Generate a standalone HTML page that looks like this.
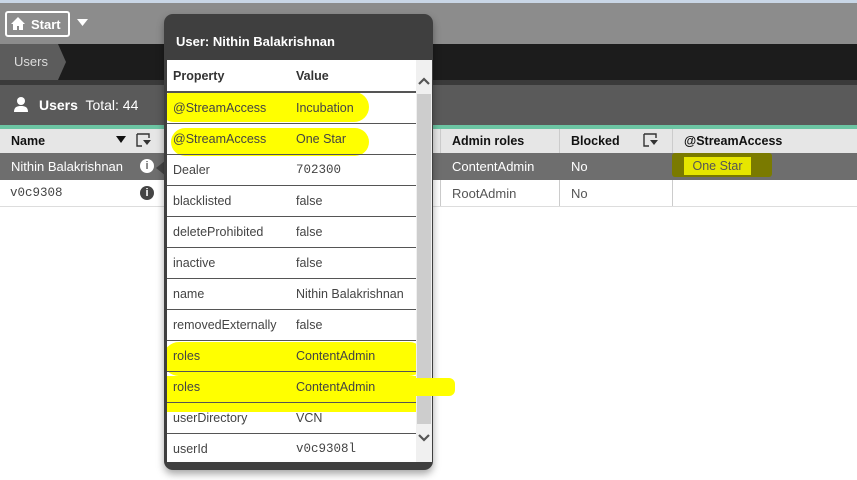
<!DOCTYPE html>
<html><head><meta charset="utf-8"><style>
*{margin:0;padding:0;box-sizing:border-box}
body{width:857px;height:480px;overflow:hidden;background:#fff;font-family:"Liberation Sans",sans-serif;position:relative;font-size:13px}
.abs{position:absolute}
.hl{position:absolute;background:#ffff00;border-radius:16px}
td{border-bottom:1px solid #555;height:31px;padding-left:6px;color:#444;font-size:12.5px}
</style></head><body>
<div class="abs" style="left:0;top:0;width:857px;height:3px;background:#c9d6e6"></div>
<div class="abs" style="left:0;top:3px;width:857px;height:41px;background:#8c8c8c"></div>
<div class="abs" style="left:5px;top:11px;width:65px;height:26px;border:2px solid #fff;border-radius:3px;color:#fff;font-weight:bold;font-size:13px;padding:4px 0 0 24px">Start</div>
<svg class="abs" style="left:10px;top:16px" width="16" height="16" viewBox="0 0 16 16"><path d="M8 1L1 8h2v6h4v-4h2v4h4V8h2z" fill="#fff"/></svg>
<svg class="abs" style="left:77px;top:19px" width="12" height="8"><path d="M0 0h11L5.5 7z" fill="#fff"/></svg>
<div class="abs" style="left:0;top:44px;width:857px;height:36px;background:#1c1c1c"></div>
<svg class="abs" style="left:0;top:44px" width="70" height="36"><path d="M0 0H58L66 18 58 36H0z" fill="#5c5c5c"/></svg>
<div class="abs" style="left:14px;top:54px;color:#ddd;font-size:13px">Users</div>
<div class="abs" style="left:0;top:80px;width:857px;height:5px;background:#3a3a3a"></div>
<div class="abs" style="left:0;top:85px;width:857px;height:40px;background:#5a5a5a"></div>
<svg class="abs" style="left:13px;top:96px" width="16" height="16" viewBox="0 0 16 16"><circle cx="8" cy="5" r="4" fill="#fff"/><path d="M1 16c0-5 3-6 7-6s7 1 7 6z" fill="#fff"/></svg>
<div class="abs" style="left:39px;top:97px;color:#fff;font-size:14px"><b>Users</b>&nbsp; Total: 44</div>
<div class="abs" style="left:0;top:125px;width:857px;height:4px;background:#6cc5a3"></div>
<div class="abs" style="left:0;top:129px;width:857px;height:24px;background:#e6e6e6"></div>
<div class="abs" style="left:11px;top:134px;font-weight:bold;font-size:12.5px;color:#111">Name</div>
<svg class="abs" style="left:116px;top:136px" width="10" height="7"><path d="M0 0h10L5 7z" fill="#111"/></svg>
<svg class="abs" style="left:136px;top:133px" width="16" height="16"><path d="M1 1h12v4M1 1v12h5" stroke="#333" fill="none" stroke-width="1.4"/><path d="M7 7h8l-4 5z" fill="#333"/></svg>
<div class="abs" style="left:440px;top:129px;width:1px;height:77px;background:#ccc"></div>
<div class="abs" style="left:559px;top:129px;width:1px;height:77px;background:#ccc"></div>
<div class="abs" style="left:672px;top:129px;width:1px;height:77px;background:#ccc"></div>
<div class="abs" style="left:452px;top:134px;font-weight:bold;font-size:12.5px;color:#111">Admin roles</div>
<div class="abs" style="left:571px;top:134px;font-weight:bold;font-size:12.5px;color:#111">Blocked</div>
<svg class="abs" style="left:643px;top:133px" width="16" height="16"><path d="M1 1h12v4M1 1v12h5" stroke="#333" fill="none" stroke-width="1.4"/><path d="M7 7h8l-4 5z" fill="#333"/></svg>
<div class="abs" style="left:684px;top:134px;font-weight:bold;font-size:12.5px;color:#111">@StreamAccess</div>
<div class="abs" style="left:0;top:153px;width:857px;height:27px;background:#6e6e6e"></div>
<div class="abs" style="left:0;top:206px;width:857px;height:1px;background:#ddd"></div>
<div class="abs" style="left:11px;top:159px;color:#fff">Nithin Balakrishnan</div>
<div class="abs" style="left:140px;top:159px;width:14px;height:14px;border-radius:50%;background:#fff;color:#6e6e6e;font-size:11px;font-weight:bold;text-align:center;line-height:14px">i</div>
<div class="abs" style="left:10px;top:186px;color:#444;font-family:'Liberation Mono',monospace;font-size:12.5px">v0c9308</div>
<div class="abs" style="left:140px;top:186px;width:14px;height:14px;border-radius:50%;background:#444;color:#fff;font-size:11px;font-weight:bold;text-align:center;line-height:14px">i</div>
<div class="abs" style="left:452px;top:159px;color:#fff">ContentAdmin</div>
<div class="abs" style="left:571px;top:159px;color:#fff">No</div>
<div class="abs" style="left:452px;top:186px;color:#555">RootAdmin</div>
<div class="abs" style="left:571px;top:186px;color:#555">No</div>
<div class="abs" style="left:672px;top:153px;width:100px;height:24px;background:#7a7a00;border-radius:3px"></div>
<div class="abs" style="left:684px;top:157px;width:67px;height:18px;background:#e6e600;color:#555;text-align:center;line-height:18px;font-size:12.5px">One Star</div>
<svg class="abs" style="left:154px;top:160px" width="12" height="16"><path d="M12 0L2 8l10 8z" fill="#444"/></svg>
<div class="abs" style="left:164px;top:14px;width:269px;height:456px;background:#3f3f3f;border-radius:9px;box-shadow:0 4px 8px rgba(0,0,0,.35)"></div>
<div class="abs" style="left:176px;top:34px;color:#fff;font-weight:bold;font-size:13px">User: Nithin Balakrishnan</div>
<div class="abs" style="left:167px;top:60px;width:249px;height:402px;background:#fff;overflow:hidden">
<div class="hl" style="left:-8px;top:32px;width:210px;height:30px"></div>
<div class="hl" style="left:4px;top:68px;width:198px;height:28px"></div>
<div class="hl" style="left:-4px;top:282px;width:262px;height:34px"></div>
<div class="hl" style="left:-15px;top:316px;width:300px;height:36px"></div>
<table style="border-collapse:collapse;width:249px;position:relative">
<tr><td style="height:32px;font-weight:bold;color:#333;width:123px;border-bottom:2px solid #555">Property</td><td style="font-weight:bold;color:#333;border-bottom:2px solid #555">Value</td></tr>
<tr><td>@StreamAccess</td><td>Incubation</td></tr>
<tr><td>@StreamAccess</td><td>One Star</td></tr>
<tr><td>Dealer</td><td style="font-family:'Liberation Mono',monospace">702300</td></tr>
<tr><td>blacklisted</td><td>false</td></tr>
<tr><td>deleteProhibited</td><td>false</td></tr>
<tr><td>inactive</td><td>false</td></tr>
<tr><td>name</td><td style="white-space:nowrap">Nithin Balakrishnan</td></tr>
<tr><td>removedExternally</td><td>false</td></tr>
<tr><td>roles</td><td>ContentAdmin</td></tr>
<tr><td>roles</td><td>ContentAdmin</td></tr>
<tr><td>userDirectory</td><td>VCN</td></tr>
<tr><td style="border:none">userId</td><td style="border:none;font-family:'Liberation Mono',monospace">v0c9308l</td></tr>
</table></div>
<div class="abs" style="left:416px;top:60px;width:16px;height:402px;background:#f0f0f0"></div>
<div class="abs" style="left:417px;top:94px;width:14px;height:330px;background:#cdcdcd"></div>
<svg class="abs" style="left:417px;top:76px" width="14" height="10"><path d="M2 8l5-5 5 5" stroke="#555" stroke-width="2.2" fill="none"/></svg>
<svg class="abs" style="left:417px;top:433px" width="14" height="10"><path d="M2 2l5 5 5-5" stroke="#555" stroke-width="2.2" fill="none"/></svg>
<div class="abs" style="left:400px;top:378px;width:55px;height:18px;background:#ffff00;border-radius:6px"></div>
</body></html>
